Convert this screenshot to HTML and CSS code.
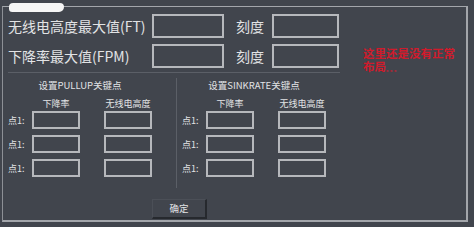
FILE: index.html
```html
<!DOCTYPE html>
<html lang="zh-CN">
<head>
  <meta charset="UTF-8" />
  <title>关键点设置</title>
  <link rel="stylesheet" href="styles.css">
</head>
<body>

  <div class="redact"></div>

  <div class="frame">
    <div class="limits">
      <span class="label">无线电高度最大值(FT)</span>
      <span class="box"></span>
      <span class="scale">刻度</span>
      <span class="box"></span>

      <span class="label">下降率最大值(FPM)</span>
      <span class="box"></span>
      <span class="scale">刻度</span>
      <span class="box"></span>
      <p class="note">这里还是没有正常<br>布局<small>。。。</small></p>
    </div>

    <div class="sep"></div>

    <div class="groups">
      <section class="group left">
        <h4>设置PULLUP关键点</h4>
        <div class="heads">
          <span>下降率</span>
          <span>无线电高度</span>
        </div>
        <div class="rows">
          <span class="pt">点1:</span><span class="box"></span><span class="box"></span>
          <span class="pt">点1:</span><span class="box"></span><span class="box"></span>
          <span class="pt">点1:</span><span class="box"></span><span class="box"></span>
        </div>
      </section>

      <section class="group">
        <h4>设置SINKRATE关键点</h4>
        <div class="heads">
          <span>下降率</span>
          <span>无线电高度</span>
        </div>
        <div class="rows">
          <span class="pt">点1:</span><span class="box"></span><span class="box"></span>
          <span class="pt">点1:</span><span class="box"></span><span class="box"></span>
          <span class="pt">点1:</span><span class="box"></span><span class="box"></span>
        </div>
      </section>
    </div>

    <div class="actions">
      <button>确定</button>
    </div>
  </div>

</body>
</html>
```

FILE: styles.css
```css
body {
  margin: 0;
  width: 474px;
  height: 227px;
  overflow: hidden;
  background-color: #41454d;
  color: #e2e3e5;
  font-family: "Noto Sans CJK SC", "DejaVu Sans", sans-serif;
  position: relative;
}

/* white smudge hiding the original title */
.redact {
  position: absolute;
  left: 9px;
  top: 3px;
  width: 55px;
  height: 9px;
  border-radius: 5px 5px 6px 4px;
  background-color: #f5f5f5;
  filter: blur(0.6px);
}

.frame {
  box-sizing: border-box;
  margin: 6px 6px 0 2px;
  height: 216px;
  border-top: 1px solid #a3a6ab;
  border-left: 1px solid #8d9096;
  border-right: 2px solid #a3a6ab;
  border-bottom: 2px solid #a3a6ab;
}

.limits {
  display: grid;
  grid-template-columns: 144px 72px 48px 67px auto;
  grid-template-rows: 24px 24px;
  row-gap: 6px;
  align-items: center;
  padding: 7px 0 0 5px;
}

.label {
  grid-column: 1;
  font-size: 14px;
  line-height: 24px;
  white-space: nowrap;
}

.scale {
  font-size: 14px;
  padding-left: 12px;
}

.box {
  box-sizing: border-box;
  height: 100%;
  border: 2px solid #b6b8bc;
}

.note {
  grid-column: 5;
  grid-row: 2;
  align-self: start;
  margin: 3px 0 0 24px;
  color: #cf1b2c;
  font-size: 11.5px;
  font-weight: bold;
  line-height: 13px;
  white-space: nowrap;
}

.note small {
  font-size: 6px;
  letter-spacing: 1px;
}

.sep {
  margin: 4px 0 0 5px;
  width: 332px;
  height: 1px;
  background-color: #5b5f67;
}

.groups {
  display: flex;
  margin-top: 5px;
}

.group {
  height: 110px;
  padding-left: 5px;
  font-size: 9px;
}

.group.left {
  width: 168px;
  border-right: 1px solid #5b5f67;
}

.group h4 {
  width: 144px;
  margin: 1px 0 7px;
  text-align: center;
  font-size: 9.5px;
  font-weight: normal;
  line-height: 12px;
}

.heads {
  display: grid;
  grid-template-columns: 48px 48px;
  column-gap: 24px;
  margin: 0 0 1px 24px;
  text-align: center;
  line-height: 12px;
}

.rows {
  display: grid;
  grid-template-columns: 24px 48px 72px;
  grid-auto-rows: 18px;
  row-gap: 6px;
  align-items: center;
}

.rows .box:nth-child(3n) {
  margin-left: 24px;
}

.rows .pt {
  font-size: 9px;
}

.actions {
  margin: 5px 0 0 149px;
}

button {
  width: 55px;
  height: 20px;
  padding: 0;
  background-color: #41454d;
  color: #e2e3e5;
  font-family: inherit;
  font-size: 9.5px;
  border: none;
  border-top: 1px solid #4b4f57;
  border-left: 1px solid #4b4f57;
  border-right: 2px solid #26292e;
  border-bottom: 2px solid #26292e;
}
```
